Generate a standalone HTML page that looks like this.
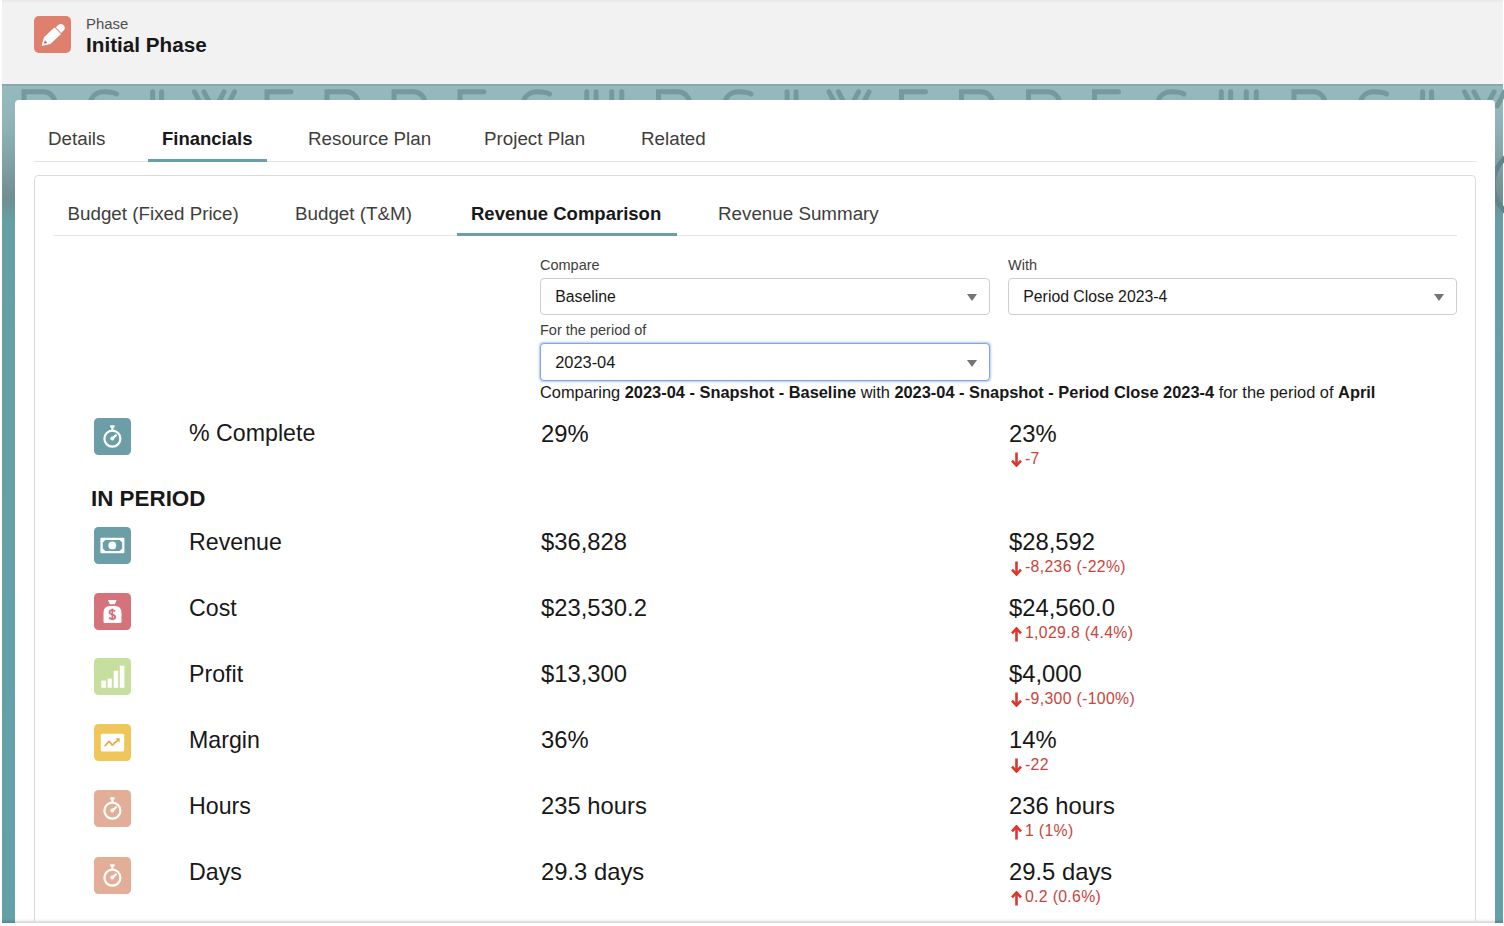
<!DOCTYPE html>
<html><head><meta charset="utf-8">
<style>
*{margin:0;padding:0;box-sizing:border-box}
html,body{width:1504px;height:926px;overflow:hidden;background:#fff;font-family:"Liberation Sans",sans-serif;color:#181818}
.a{position:absolute;white-space:nowrap}
svg{display:block}
#hdr{position:absolute;left:2px;top:0;width:1501px;height:84px;background:#f3f2f2}
#hdrtop{position:absolute;left:2px;top:0;width:1501px;height:3px;background:linear-gradient(#e8e8e8,#f3f2f2)}
#teal{position:absolute;left:2px;top:84px;width:1501px;height:839px;background:linear-gradient(#95babd 0px,#92b7ba 30px,#86a8ab 66px,#718e91 114px,#66a0a6 138px,#63a1a8 839px)}
#tealtop{position:absolute;left:2px;top:84px;width:1501px;height:2px;background:#88a9ac}
#shadow{position:absolute;left:2px;top:918px;width:1501px;height:5px;background:linear-gradient(rgba(0,0,0,0),rgba(0,0,0,0.03) 40%,rgba(0,0,0,0.18))}
#card{position:absolute;left:15.3px;top:100.2px;width:1480.2px;height:830px;background:#fff;border-radius:4px 4px 0 0}
#hicon{position:absolute;left:34.2px;top:15.7px;width:37.3px;height:37px;background:#df806e;border-radius:5px}
.t1{font-size:18.8px;color:#3e3e3c}
.lab{font-size:14.5px;color:#3e3e3c}
.sel{position:absolute;height:37px;border:1px solid #cecece;border-radius:4px;background:#fff}
.sel .v{position:absolute;left:14px;font-size:15.8px;color:#181818;white-space:nowrap}
.tri{position:absolute;width:0;height:0;border-left:5.8px solid transparent;border-right:5.8px solid transparent;border-top:7.8px solid #747474}
.ic{position:absolute;left:93.6px;width:37px;height:37px;border-radius:4.5px}
.name{font-size:23.2px;color:#181818}
.val{font-size:23.8px;color:#181818}
.d{font-size:15.8px;color:#c8453d;letter-spacing:0.33px}
</style></head>
<body>
<div id="hdr"></div>
<div id="hdrtop"></div>
<div id="hicon"><svg width="37" height="37" viewBox="0 0 37 37"><g transform="translate(8.3,29.2) rotate(-43)"><path d="M0,0 L7,-4.1 H20.6 V4.1 H7 Z" fill="#fff" stroke="#fff" stroke-width="1.2" stroke-linejoin="round"/><path d="M2,0 L5.2,-1.8 V1.8 Z" fill="#a4707a"/><path d="M22.1,-3.9 H25.2 A3.9 3.9 0 0 1 25.2,3.9 H22.1 Z" fill="#fff"/></g></svg></div>
<div class="a" style="left:86px;top:16.42px;font-size:14.9px;color:#514f4d">Phase</div>
<div class="a" style="left:86px;top:32.57px;font-size:20.7px;font-weight:bold;color:#181818">Initial Phase</div>
<div id="teal"></div>
<div id="tealtop"></div>
<svg class="a" style="left:0;top:0" width="1504" height="926"><path d="M24.0,106 V91.8 H43.5 A11.5 11.5 0 0 1 55.0,103.3 M89.5,106 C90.5,96 97.0,91.8 104.0,91.8 C110.0,91.8 114.0,92.5 116.5,94 M152.6,91.8 V106 M161.6,91.8 V106 M194.5,91.8 L201.8,106 M204.0,91.8 L211.3,106 M224.0,91.8 L216.7,106 M234.5,91.8 L227.2,106 M267.0,106 V91.8 H291.0 M327.0,106 V91.8 H346.5 A11.5 11.5 0 0 1 358.0,103.3 M394.0,106 V91.8 H413.5 A11.5 11.5 0 0 1 425.0,103.3 M460.0,106 V91.8 H484.0 M522.5,106 C523.5,96 530.0,91.8 537.0,91.8 C543.0,91.8 547.0,92.5 549.5,94 M586.8,91.8 V106 M596.1,91.8 V106 M611.8,91.8 V106 M621.8,91.8 V106 M658.5,106 V91.8 H678.0 A11.5 11.5 0 0 1 689.5,103.3 M724.0,106 C725.0,96 731.5,91.8 738.5,91.8 C744.5,91.8 748.5,92.5 751.0,94 M787.1,91.8 V106 M796.1,91.8 V106 M829.0,91.8 L836.3,106 M838.5,91.8 L845.8,106 M858.5,91.8 L851.2,106 M869.0,91.8 L861.7,106 M901.5,106 V91.8 H925.5 M961.5,106 V91.8 H981.0 A11.5 11.5 0 0 1 992.5,103.3 M1028.5,106 V91.8 H1048.0 A11.5 11.5 0 0 1 1059.5,103.3 M1094.5,106 V91.8 H1118.5 M1157.0,106 C1158.0,96 1164.5,91.8 1171.5,91.8 C1177.5,91.8 1181.5,92.5 1184.0,94 M1221.3,91.8 V106 M1230.6,91.8 V106 M1246.3,91.8 V106 M1256.3,91.8 V106 M1294.0,106 V91.8 H1313.5 A11.5 11.5 0 0 1 1325.0,103.3 M1359.5,106 C1360.5,96 1367.0,91.8 1374.0,91.8 C1380.0,91.8 1384.0,92.5 1386.5,94 M1422.6,91.8 V106 M1431.6,91.8 V106 M1464.5,91.8 L1471.8,106 M1474.0,91.8 L1481.3,106 M1494.0,91.8 L1486.7,106 M1504.5,91.8 L1497.2,106" fill="none" stroke="#759a9d" stroke-width="5" stroke-linecap="round"/><circle cx="1529.3" cy="184.5" r="36" fill="none" stroke="#608589" stroke-width="5"/></svg>
<div id="card"></div>
<div id="shadow"></div>

<div class="a t1" style="left:48px;top:127.99px">Details</div>
<div class="a t1" style="left:162px;top:128.26px;font-size:18.5px;font-weight:bold;color:#181818">Financials</div>
<div class="a t1" style="left:308px;top:127.99px">Resource Plan</div>
<div class="a t1" style="left:484px;top:127.99px">Project Plan</div>
<div class="a t1" style="left:641px;top:127.99px">Related</div>
<div class="a" style="left:33.5px;top:160.5px;width:1443.5px;height:1px;background:#e5e5e5"></div>
<div class="a" style="left:148px;top:158.6px;width:119px;height:3px;background:#6a9fa5"></div>

<div class="a" style="left:34.3px;top:174.9px;width:1442px;height:760px;border:1px solid #dddbda;border-radius:4px"></div>
<div class="a t1" style="left:67.5px;top:203.09px">Budget (Fixed Price)</div>
<div class="a t1" style="left:295px;top:203.09px">Budget (T&amp;M)</div>
<div class="a t1" style="left:471px;top:203.36px;font-size:18.5px;font-weight:bold;color:#181818">Revenue Comparison</div>
<div class="a t1" style="left:718px;top:203.09px">Revenue Summary</div>
<div class="a" style="left:53px;top:234.8px;width:1404px;height:1px;background:#e5e5e5"></div>
<div class="a" style="left:457px;top:232.6px;width:219.5px;height:3.4px;background:#6a9fa5"></div>

<div class="a lab" style="left:540px;top:257.08px">Compare</div>
<div class="sel" style="left:540.3px;top:278.3px;width:449.5px"><div class="v" style="top:8.4px">Baseline</div><div class="tri" style="left:425.5px;top:15px"></div></div>
<div class="a lab" style="left:1008px;top:257.08px">With</div>
<div class="sel" style="left:1008.3px;top:278.3px;width:448.7px"><div class="v" style="top:8.4px">Period Close 2023-4</div><div class="tri" style="left:424.7px;top:15px"></div></div>
<div class="a lab" style="left:540px;top:322.38px">For the period of</div>
<div class="sel" style="left:540.2px;top:343.2px;width:449.6px;height:37.8px;border-color:#85a5df;box-shadow:0 0 2px 0.5px #b3c8ef"><div class="v" style="top:8.56px;font-size:16.4px">2023-04</div><div class="tri" style="left:425.5px;top:15.5px"></div></div>
<div class="a" style="left:540px;top:382.86px;font-size:16.4px;color:#181818">Comparing <b>2023-04 - Snapshot - Baseline</b> with <b>2023-04 - Snapshot - Period Close 2023-4</b> for the period of <b>April</b></div>

<div class="ic" style="top:417.9px;background:#6b9ea7"><svg width="37" height="37" viewBox="0 0 37 37"><circle cx="18.4" cy="20.7" r="8" fill="none" stroke="#fff" stroke-width="2.2"/><rect x="16.1" y="7.2" width="4.6" height="2.2" rx="0.6" fill="#fff"/><rect x="17.3" y="9" width="2.2" height="3.6" fill="#fff"/><circle cx="18.3" cy="20.5" r="2" fill="#fff"/><path d="M18.3,20.5 L21.9,17.4" stroke="#fff" stroke-width="2.2" stroke-linecap="round"/></svg></div>
<div class="a name" style="left:189px;top:420.3px">% Complete</div>
<div class="a val" style="left:541px;top:419.86px">29%</div>
<div class="a val" style="left:1009px;top:419.86px">23%</div>
<svg class="a" style="left:1011px;top:452.15px" width="11" height="15" viewBox="0 0 11 14"><path d="M5.5,0 V12" stroke="#e0352b" stroke-width="2.6"/><path d="M1,8.2 L5.5,13 L10,8.2" fill="none" stroke="#e0352b" stroke-width="2.6" stroke-linejoin="miter"/></svg>
<div class="a d" style="left:1025px;top:449.8px">-7</div>
<div class="a" style="left:91px;top:485.83px;font-size:22.4px;font-weight:bold;color:#181818">IN PERIOD</div>
<div class="ic" style="top:526.9px;background:#6b9ea7"><svg width="37" height="37" viewBox="0 0 37 37"><rect x="6.4" y="10.7" width="24" height="15.5" rx="1" fill="#fff"/><path d="M11.3,12.9 H25.7 L28.2,15.4 V21.5 L25.7,24 H11.3 L8.8,21.5 V15.4 Z" fill="#6b9ea7"/><circle cx="18.3" cy="18.4" r="3.9" fill="#fff"/></svg></div>
<div class="a name" style="left:189px;top:528.8px">Revenue</div>
<div class="a val" style="left:541px;top:528.36px">$36,828</div>
<div class="a val" style="left:1009px;top:528.36px">$28,592</div>
<svg class="a" style="left:1011px;top:560.65px" width="11" height="15" viewBox="0 0 11 14"><path d="M5.5,0 V12" stroke="#e0352b" stroke-width="2.6"/><path d="M1,8.2 L5.5,13 L10,8.2" fill="none" stroke="#e0352b" stroke-width="2.6" stroke-linejoin="miter"/></svg>
<div class="a d" style="left:1025px;top:558.3px">-8,236 (-22%)</div>
<div class="ic" style="top:592.9px;background:#d5727b"><svg width="37" height="37" viewBox="0 0 37 37"><path d="M13.9,7 H22.6 L20.9,11.2 H15.9 Z" fill="#fff"/><path d="M9.5,28.6 V20 Q9.5,12.9 16,12.9 H21 Q27.5,12.9 27.5,20 V28.6 Q27.5,30.1 26,30.1 H11 Q9.5,30.1 9.5,28.6 Z" fill="#fff"/><path d="M18.3,15.6 V27.1" stroke="#d5727b" stroke-width="1.7"/><path d="M21,18.6 C20.4,17.6 19.5,17.1 18.3,17.1 C16.6,17.1 15.5,18 15.5,19.3 C15.5,22.2 21.2,20.9 21.2,23.9 C21.2,25.2 20,26 18.3,26 C16.9,26 15.9,25.5 15.2,24.4" fill="none" stroke="#d5727b" stroke-width="1.9"/></svg></div>
<div class="a name" style="left:189px;top:594.7px">Cost</div>
<div class="a val" style="left:541px;top:593.96px">$23,530.2</div>
<div class="a val" style="left:1009px;top:593.96px">$24,560.0</div>
<svg class="a" style="left:1011px;top:626.9px" width="11" height="15" viewBox="0 0 11 14"><path d="M5.5,14 V2" stroke="#e0352b" stroke-width="2.6"/><path d="M1,5.8 L5.5,1 L10,5.8" fill="none" stroke="#e0352b" stroke-width="2.6" stroke-linejoin="miter"/></svg>
<div class="a d" style="left:1025px;top:623.9px">1,029.8 (4.4%)</div>
<div class="ic" style="top:658.2px;background:#c6df9f"><svg width="37" height="37" viewBox="0 0 37 37"><rect x="7.3" y="22.6" width="4.6" height="7.2" fill="#fff"/><rect x="13.6" y="20.6" width="4.2" height="9.2" fill="#fff"/><rect x="19.7" y="12.8" width="4.4" height="17" fill="#fff"/><rect x="25.8" y="7.7" width="4.6" height="22.1" fill="#fff"/></svg></div>
<div class="a name" style="left:189px;top:660.7px">Profit</div>
<div class="a val" style="left:541px;top:659.86px">$13,300</div>
<div class="a val" style="left:1009px;top:659.86px">$4,000</div>
<svg class="a" style="left:1011px;top:692.15px" width="11" height="15" viewBox="0 0 11 14"><path d="M5.5,0 V12" stroke="#e0352b" stroke-width="2.6"/><path d="M1,8.2 L5.5,13 L10,8.2" fill="none" stroke="#e0352b" stroke-width="2.6" stroke-linejoin="miter"/></svg>
<div class="a d" style="left:1025px;top:689.8px">-9,300 (-100%)</div>
<div class="ic" style="top:724.2px;background:#f0c55a"><svg width="37" height="37" viewBox="0 0 37 37"><rect x="6.8" y="9.7" width="23.4" height="17.7" rx="1.5" fill="#fff"/><path d="M10.7,22.1 L15.1,17.2 L18.3,21.1 L24.4,15.6" fill="none" stroke="#e9a93c" stroke-width="1.7" stroke-linejoin="round"/><path d="M21.6,14.2 L25.6,14.2 L25.6,18.2 Z" fill="#e9a93c"/></svg></div>
<div class="a name" style="left:189px;top:726.7px">Margin</div>
<div class="a val" style="left:541px;top:725.86px">36%</div>
<div class="a val" style="left:1009px;top:725.86px">14%</div>
<svg class="a" style="left:1011px;top:758.15px" width="11" height="15" viewBox="0 0 11 14"><path d="M5.5,0 V12" stroke="#e0352b" stroke-width="2.6"/><path d="M1,8.2 L5.5,13 L10,8.2" fill="none" stroke="#e0352b" stroke-width="2.6" stroke-linejoin="miter"/></svg>
<div class="a d" style="left:1025px;top:755.8px">-22</div>
<div class="ic" style="top:790.2px;background:#e3ae97"><svg width="37" height="37" viewBox="0 0 37 37"><circle cx="18.4" cy="20.7" r="8" fill="none" stroke="#fff" stroke-width="2.2"/><rect x="16.1" y="7.2" width="4.6" height="2.2" rx="0.6" fill="#fff"/><rect x="17.3" y="9" width="2.2" height="3.6" fill="#fff"/><circle cx="18.3" cy="20.5" r="2" fill="#fff"/><path d="M18.3,20.5 L21.9,17.4" stroke="#fff" stroke-width="2.2" stroke-linecap="round"/></svg></div>
<div class="a name" style="left:189px;top:792.7px">Hours</div>
<div class="a val" style="left:541px;top:792.06px">235 hours</div>
<div class="a val" style="left:1009px;top:792.06px">236 hours</div>
<svg class="a" style="left:1011px;top:825.0px" width="11" height="15" viewBox="0 0 11 14"><path d="M5.5,14 V2" stroke="#e0352b" stroke-width="2.6"/><path d="M1,5.8 L5.5,1 L10,5.8" fill="none" stroke="#e0352b" stroke-width="2.6" stroke-linejoin="miter"/></svg>
<div class="a d" style="left:1025px;top:822.0px">1 (1%)</div>
<div class="ic" style="top:856.5px;background:#e3ae97"><svg width="37" height="37" viewBox="0 0 37 37"><circle cx="18.4" cy="20.7" r="8" fill="none" stroke="#fff" stroke-width="2.2"/><rect x="16.1" y="7.2" width="4.6" height="2.2" rx="0.6" fill="#fff"/><rect x="17.3" y="9" width="2.2" height="3.6" fill="#fff"/><circle cx="18.3" cy="20.5" r="2" fill="#fff"/><path d="M18.3,20.5 L21.9,17.4" stroke="#fff" stroke-width="2.2" stroke-linecap="round"/></svg></div>
<div class="a name" style="left:189px;top:858.7px">Days</div>
<div class="a val" style="left:541px;top:857.96px">29.3 days</div>
<div class="a val" style="left:1009px;top:857.96px">29.5 days</div>
<svg class="a" style="left:1011px;top:890.9px" width="11" height="15" viewBox="0 0 11 14"><path d="M5.5,14 V2" stroke="#e0352b" stroke-width="2.6"/><path d="M1,5.8 L5.5,1 L10,5.8" fill="none" stroke="#e0352b" stroke-width="2.6" stroke-linejoin="miter"/></svg>
<div class="a d" style="left:1025px;top:887.9px">0.2 (0.6%)</div>
<div class="a" style="left:0;top:923px;width:1504px;height:3px;background:#fff"></div>
</body></html>
